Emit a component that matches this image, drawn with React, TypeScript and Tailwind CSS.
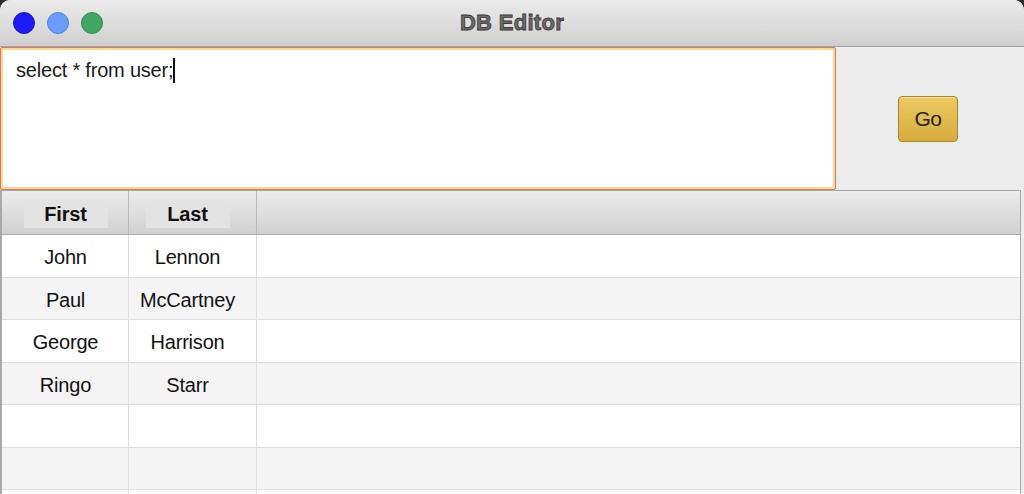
import { useState } from "react";

const rows = [
  ["John", "Lennon"],
  ["Paul", "McCartney"],
  ["George", "Harrison"],
  ["Ringo", "Starr"],
  ["", ""],
  ["", ""],
  ["", ""],
];

export default function App() {
  const [query, setQuery] = useState("select * from user;");

  return (
    <div
      className="w-[1024px] h-[494px] bg-[#2c2c2c] overflow-hidden"
      style={{ fontFamily: '"Liberation Sans", Helvetica, Arial, sans-serif' }}
    >
      <div className="h-full flex flex-col rounded-t-[10px] overflow-hidden bg-[#ececec]">
        {/* title bar */}
        <div className="relative h-[47px] shrink-0 flex items-center px-[13px] gap-[12px] bg-gradient-to-b from-[#ebebeb] to-[#cfcfcf] border-b border-[#a4a4a4]">
          <span className="w-[22px] h-[22px] rounded-full bg-[#1b1bf8] border border-[#1414c8]" />
          <span className="w-[22px] h-[22px] rounded-full bg-[#6c9bfc] border border-[#4d7fe0]" />
          <span className="w-[22px] h-[22px] rounded-full bg-[#40a663] border border-[#2f8a4e]" />
          <div className="absolute inset-0 flex items-center justify-center pb-[2px] pointer-events-none">
            <span
              className="text-[22px] font-bold text-[#6a6a6a] tracking-[0.3px]"
              style={{ WebkitTextStroke: "0.8px #3a3a3a" }}
            >
              DB Editor
            </span>
          </div>
        </div>

        {/* query area */}
        <div className="h-[143px] shrink-0 flex">
          <div className="w-[836px] h-full border border-[#d07a6c] rounded-[2px] p-[2px] bg-[#fcd98e]">
            <div className="w-full h-full bg-white rounded-[1px] px-[13px] pt-[6px]">
              <div className="flex items-start">
                <span className="text-[20px] text-[#1a1a1a] tracking-[-0.2px] leading-[28px]">{query}</span>
                <span className="w-[2px] h-[25px] mt-[2px] bg-[#111]" />
              </div>
              <input className="hidden" value={query} onChange={(e) => setQuery(e.target.value)} />
            </div>
          </div>
          <div className="flex-1 flex items-center justify-center pr-[4px]">
            <button className="w-[60px] h-[46px] rounded-[4px] border border-[#a7852e] bg-gradient-to-b from-[#ecca62] to-[#d6ab3c] text-[21px] text-[#222] tracking-[-0.5px] shadow-[inset_0_1px_0_#f6de8e]">
              Go
            </button>
          </div>
        </div>

        {/* results table */}
        <div className="flex-1 mr-[3px] border-l-2 border-r border-t border-[#a9a9a9] bg-white overflow-hidden">
          <div className="h-[44px] flex bg-gradient-to-b from-[#ececec] to-[#d0d0d0] border-b border-[#a9a9a9]">
            <div className="w-[127px] shrink-0 border-r border-[#b8b8b8] flex items-center justify-center pl-[1px] pt-[3px]">
              <span className="w-[84px] h-[28px] flex items-center justify-center bg-[#e3e3e3] text-[20px] font-bold text-[#111] tracking-[-0.2px]">
                First
              </span>
            </div>
            <div className="w-[128px] shrink-0 border-r border-[#b8b8b8] flex items-center justify-center pr-[10px] pt-[3px]">
              <span className="w-[84px] h-[28px] flex items-center justify-center bg-[#e3e3e3] text-[20px] font-bold text-[#111] tracking-[-0.2px]">
                Last
              </span>
            </div>
            <div className="flex-1" />
          </div>
          {rows.map((r, i) => (
            <div
              key={i}
              className={`h-[42.5px] flex border-b border-[#dedede] text-[20px] text-[#111] tracking-[-0.2px] ${i % 2 === 1 ? "bg-[#f4f4f4]" : "bg-white"}`}
            >
              <div className="w-[127px] shrink-0 border-r border-[#dedede] flex items-center justify-center pl-[1px] pt-[3px]">
                {r[0]}
              </div>
              <div className="w-[128px] shrink-0 border-r border-[#dedede] flex items-center justify-center pr-[10px] pt-[3px]">
                {r[1]}
              </div>
              <div className="flex-1" />
            </div>
          ))}
        </div>
      </div>
    </div>
  );
}
